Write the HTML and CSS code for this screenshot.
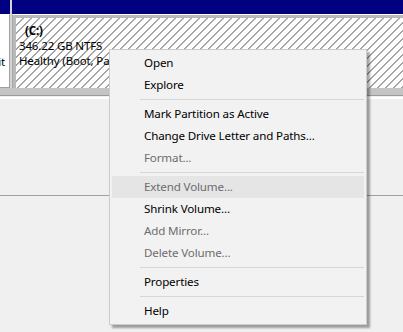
FILE: index.html
```html
<!DOCTYPE html>
<html lang="en">
<head>
  <meta charset="UTF-8">
  <title>Disk Management</title>
  <link rel="stylesheet" href="styles.css">
</head>
<body>
  <div class="disk">
    <div class="disk-row">
      <div class="part part-small">
        <div class="part-bar"></div>
        <div class="part-body">
          <div class="part-line">&nbsp;</div>
          <div class="part-line">&nbsp;</div>
          <div class="part-line clip-end">Healthy (Recovery Partit</div>
        </div>
      </div>
      <div class="part part-main">
        <div class="part-bar"></div>
        <div class="part-frame">
          <div class="part-hatch">
            <div class="part-line part-label">(C:)</div>
            <div class="part-line">346.22 GB NTFS</div>
            <div class="part-line">Healthy (Boot, Page File, Crash Dump, Primary Partition)</div>
          </div>
        </div>
      </div>
    </div>
    <div class="disk-base"></div>
  </div>
  <div class="empty-area"></div>

  <div class="menu">
    <div class="menu-item">Open</div>
    <div class="menu-item">Explore</div>
    <div class="menu-sep"></div>
    <div class="menu-item">Mark Partition as Active</div>
    <div class="menu-item">Change Drive Letter and Paths...</div>
    <div class="menu-item disabled">Format...</div>
    <div class="menu-sep"></div>
    <div class="menu-item disabled hover">Extend Volume...</div>
    <div class="menu-item">Shrink Volume...</div>
    <div class="menu-item disabled">Add Mirror...</div>
    <div class="menu-item disabled">Delete Volume...</div>
    <div class="menu-sep"></div>
    <div class="menu-item">Properties</div>
    <div class="menu-sep"></div>
    <div class="menu-item">Help</div>
  </div>
</body>
</html>
```

FILE: styles.css
```css
body {
  margin: 0;
  background-color: #f0f0f0;
  font-family: 'Noto Sans', 'Open Sans', sans-serif;
  font-size: 11.5px;
  letter-spacing: -0.15px;
  color: #000;
  overflow: hidden;
}

.disk {
  width: 403px;
}

.disk-row {
  display: flex;
  gap: 2px;
  height: 88px;
  background-color: #d4d4d4;
}

.part {
  display: flex;
  flex-direction: column;
  overflow: hidden;
}

.part-small {
  width: 10px;
  flex-shrink: 0;
}

.part-main {
  flex: 1;
}

.part-bar {
  height: 14px;
  background-color: #000080;
  flex-shrink: 0;
}

.part-body {
  flex: 1;
  background-color: #fff;
  border-top: 1px solid #fff;
  border-right: 1px solid #a0a0a0;
  border-bottom: 1px solid #a0a0a0;
  padding-top: 9px;
  overflow: hidden;
}

.part-line {
  line-height: 15px;
  height: 15px;
  white-space: nowrap;
  overflow: hidden;
}

.clip-end {
  direction: rtl;
  padding-right: 4px;
}

.part-frame {
  flex: 1;
  background-color: #b9b9b9;
  border-left: 1px solid #a8a8a8;
  border-top: 1px solid #fff;
  padding: 3px 0 0 3px;
  display: flex;
}

.part-hatch {
  flex: 1;
  background-color: #fff;
  background-image: repeating-linear-gradient(135deg, #fff 0 4.6px, #a4a4a4 4.6px 5.66px);
  padding: 5px 0 0 3px;
  overflow: hidden;
}

.part-label {
  font-weight: bold;
  padding-left: 6px;
}

.disk-base {
  height: 7px;
  background-color: #c4c4c4;
  border-bottom: 1px solid #9a9a9a;
}

.empty-area {
  height: 96px;
  border-top: 2px solid #fff;
  border-bottom: 1px solid #a0a0a0;
  margin-top: 1px;
}

.menu {
  position: absolute;
  left: 109px;
  top: 49px;
  width: 252px;
  padding: 2px;
  background-color: #f2f2f2;
  border: 1px solid #cccccc;
  box-shadow: 3px 3px 2px rgba(0, 0, 0, 0.35);
  font-size: 11.6px;
}

.menu-item {
  height: 22px;
  line-height: 22px;
  padding-left: 32px;
  white-space: nowrap;
}

.menu-item.disabled {
  color: #6d6d6d;
}

.menu-item.hover {
  background-color: #e5e5e5;
}

.menu-sep {
  height: 1px;
  margin: 3px 0 3px 28px;
  background-color: #d7d7d7;
}
```
